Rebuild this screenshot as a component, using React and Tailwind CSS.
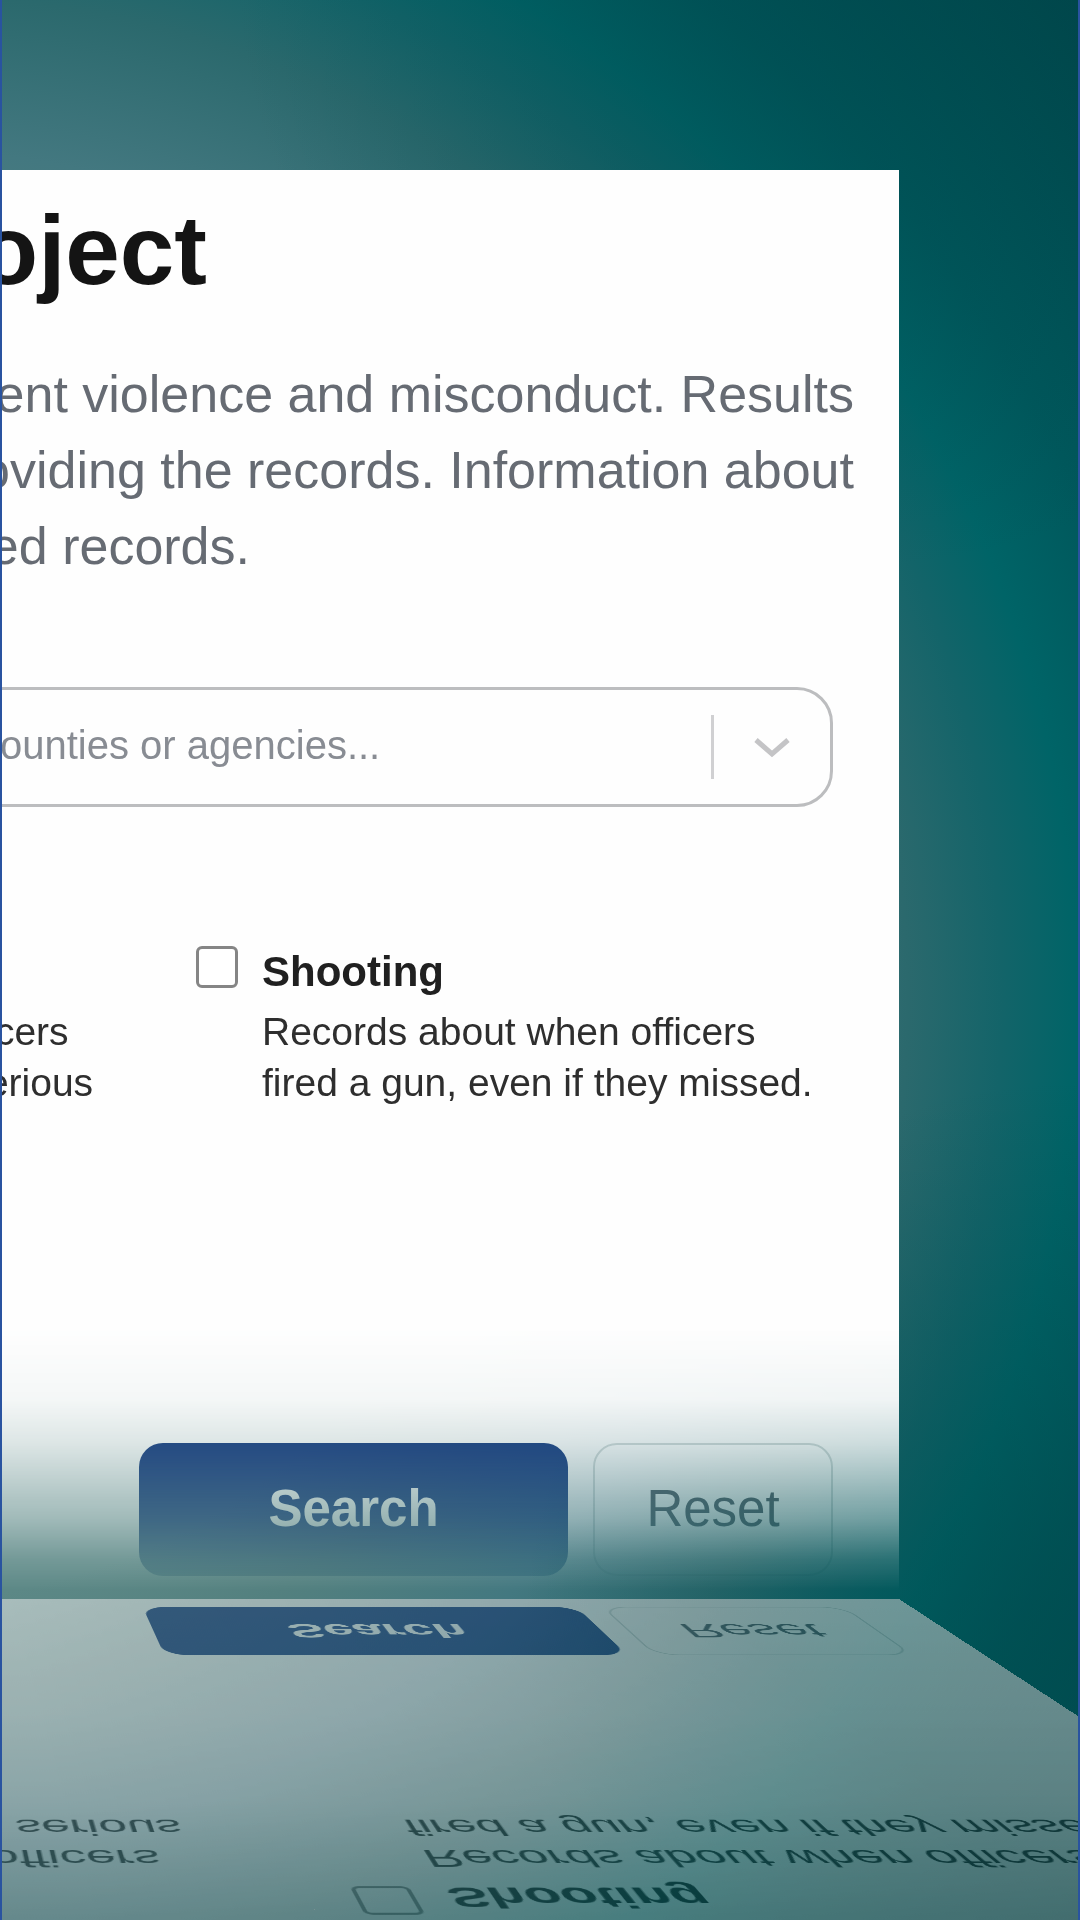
import { useId } from 'react';

const recordTypes = [
  {
    value: 'force',
    title: 'Force',
    lines: ['Records about when officers', 'used force resulting in serious'],
  },
  {
    value: 'shooting',
    title: 'Shooting',
    lines: ['Records about when officers', 'fired a gun, even if they missed.'],
  },
];

const RecordType = ({ type }) => {
  const id = useId();

  return (
    <div className="flex gap-6">
      <input
        id={id}
        type="checkbox"
        name="recordType"
        value={type.value}
        className="h-[42px] w-[42px] shrink-0 appearance-none rounded-md border-3 border-[#858585] bg-white checked:bg-[#24478c]"
      />
      <div className="whitespace-nowrap">
        <label htmlFor={id} className="block text-[42px] leading-[52px] font-bold text-[#202020]">
          {type.title}
        </label>
        <p className="mt-2 text-[39px] leading-[51px] text-[#2e2e2e]">
          {type.lines.map(line => (
            <span key={line} className="block">{line}</span>
          ))}
        </p>
      </div>
    </div>
  );
};

const SearchCard = () => (
  <div className="bg-[#fefefe] pt-[30px] pb-[23px]">
    <h1 className="w-[807px] text-right text-[98px] leading-[100px] font-bold text-[#141414]">Project</h1>
    <p className="mt-[56px] pr-[45px] text-right text-[52px] leading-[76px] whitespace-nowrap text-[#666b73]">
      <span className="block">enforcement violence and misconduct. Results</span>
      <span className="block">providing the records. Information about</span>
      <span className="block w-[850px]">related records.</span>
    </p>

    <form className="pr-[66px] pl-[109px]" onSubmit={e => e.preventDefault()}>
      <div className="mt-[103px] flex h-[120px] items-center rounded-[36px] border-3 border-[#bcbdbf] pr-10">
        <input
          type="text"
          aria-label="Counties or agencies"
          placeholder="counties or agencies..."
          className="min-w-0 flex-1 bg-transparent pb-1 pl-[468px] text-[40px] leading-[51px] outline-none placeholder:text-[#888c93]"
        />
        <span className="h-16 w-[3px] bg-[#d0d0d2]" />
        <button type="button" aria-label="Show options" className="pl-10">
          <svg className="h-9 w-9" viewBox="0 0 36 36" fill="none" stroke="#c4c4c6" strokeWidth="5">
            <path d="M2 11 L18 25 L34 11" />
          </svg>
        </button>
      </div>

      <div className="mt-[139px] grid grid-cols-[687px_1fr]">
        {recordTypes.map(type => (
          <RecordType key={type.value} type={type} />
        ))}
      </div>

      <div className="mt-[335px] flex justify-end gap-[25px] text-[51px]">
        <button type="submit" className="h-[133px] w-[429px] rounded-3xl bg-[#173b82] font-bold text-white">
          Search
        </button>
        <button type="reset" className="h-[133px] w-[240px] rounded-3xl border-2 border-[#d3dbdb] text-[#53606a]">
          Reset
        </button>
      </div>
    </form>
  </div>
);

const App = () => (
  <div className="min-h-screen overflow-hidden border-x-2 border-[#2953a0] bg-[radial-gradient(circle_at_850px_-50px,rgb(0_70_75/0.5),transparent_620px),radial-gradient(circle_at_1080px_1640px,rgb(0_72_75/0.6),transparent_560px),radial-gradient(circle_at_-100px_1000px,#5c8886_600px,#53807f_700px,#437880_850px,#2b696d_1005px,#136469_1100px,#006467_1174px,#00585c_1280px,#00474b_1540px)] pt-[170px] font-['Liberation_Sans',Arial,sans-serif]">
    <main className="mr-[179px] -ml-[602px] grid perspective-[2115px] perspective-origin-[418px_722px]">
      <div className="col-start-1 row-start-1 [mask-image:linear-gradient(to_top,transparent_8px,rgb(0_0_0/0.15)_40px,rgb(0_0_0/0.42)_80px,rgb(0_0_0/0.62)_120px,rgb(0_0_0/0.8)_157px,rgb(0_0_0/0.94)_200px,black_270px)]">
        <SearchCard />
      </div>
      {/* the same card laid flat on the floor, hinged at its bottom edge */}
      <div aria-hidden="true" inert className="relative col-start-1 row-start-1 origin-bottom [transform:rotateX(-90deg)] opacity-56">
        <SearchCard />
        <div className="absolute inset-0 bg-[linear-gradient(to_top,rgb(0_20_20/0.1),rgb(0_20_20/0.17)_300px,rgb(0_30_30/0.25)_470px,rgb(0_40_40/0.46)_656px),linear-gradient(to_right,transparent_600px,rgb(0_0_0/0.14)_1300px)]" />
      </div>
    </main>
  </div>
);

export default App;
